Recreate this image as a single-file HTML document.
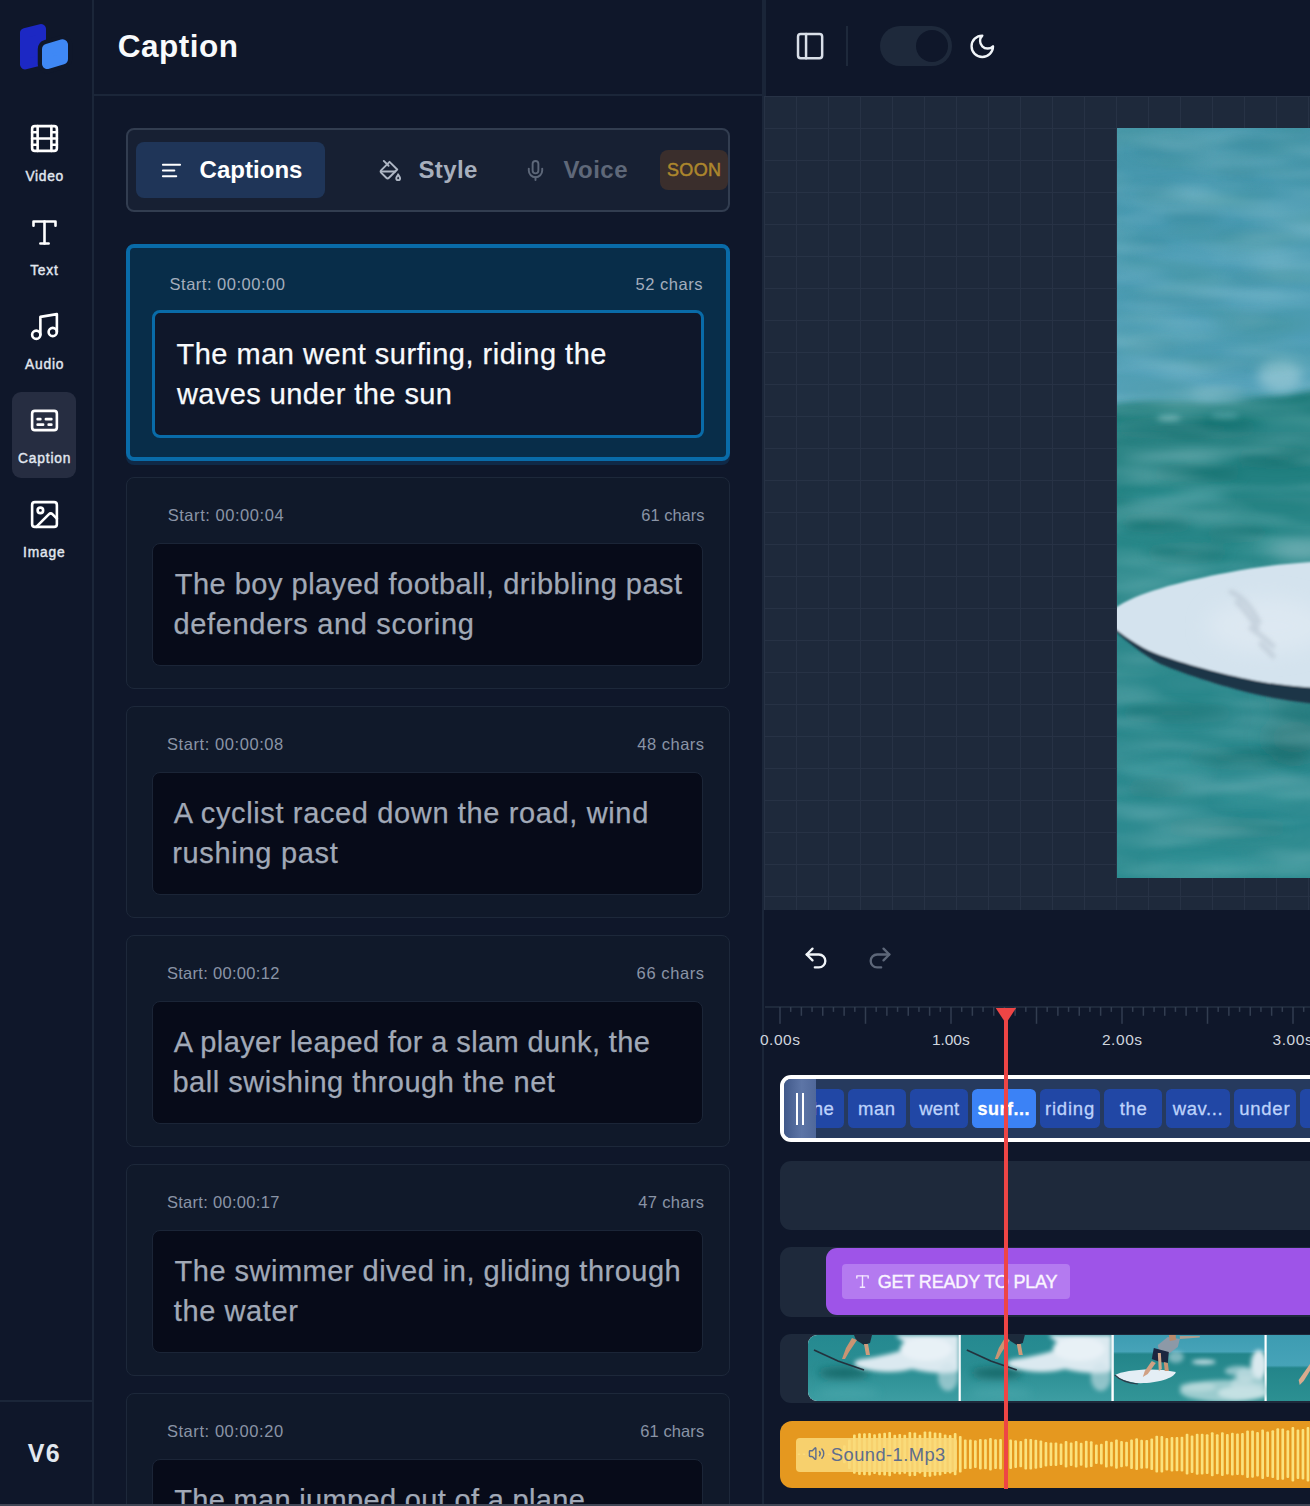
<!DOCTYPE html>
<html>
<head>
<meta charset="utf-8">
<title>Caption Editor</title>
<style>
*{box-sizing:border-box;margin:0;padding:0}
html,body{width:1310px;height:1506px;overflow:hidden;background:#0f172a;font-family:"Liberation Sans",sans-serif;color:#f8fafc}
.abs{position:absolute}
.t{position:absolute;white-space:nowrap}
#app{position:relative;width:1310px;height:1506px;overflow:hidden;background:#0f172a}
#side{position:absolute;left:0;top:0;width:94px;height:1506px;border-right:2.100px solid #1b2639}
.nav{position:absolute;left:12px;width:64px;height:86px;border-radius:9px}
.nav.active{background:#262d41}
.nav svg{position:absolute;left:15.650px;top:11.800px;width:33px;height:33px;fill:none;stroke:#fff;stroke-width:1.900;stroke-linecap:round;stroke-linejoin:round}
.nav .t{top:58.200px;font-size:13.800px;line-height:18px;color:#e2e8f0;-webkit-text-stroke:0.4px #e2e8f0}
#ver{position:absolute;left:0;top:1400px;width:92px;height:105px;border-top:2px solid #1b2639}
#ver .t{top:36px;font-size:25px;line-height:30px;color:#e2e8f0;font-weight:bold}
#panel{position:absolute;left:93px;top:0;width:671.200px;height:1506px;border-right:2.200px solid #1b2639}
#phead{position:absolute;left:0;top:0;width:669px;height:96.100px;border-bottom:2.100px solid #1b2639}
#title{left:26px;top:26px;font-size:31.5px;line-height:40px;color:#f8fafc;font-weight:bold}
#tabs{position:absolute;left:33px;top:128px;width:604px;height:84px;border:2px solid #323d50;border-radius:8px;background:#172033}
.tab{font-size:24px;line-height:30px;font-weight:bold}
.card{position:absolute;left:33px;width:604px;height:212px;border:1.600px solid #1d283a;border-radius:8px;background:#10192a}
.card .st,.card .ch{top:27px;font-size:16.5px;line-height:20px;color:#8a94a6}
.card .ta{position:absolute;left:25.400px;top:65.300px;width:551px;height:122.300px;border:1.500px solid #1b2537;border-radius:8px;background:#070b19;font-size:29px;line-height:40px;color:#a1a9b7;-webkit-text-stroke:0.25px currentColor}
.card .ln{position:absolute;white-space:nowrap;left:20.5px}
.card.act{border:4px solid #096ba8;background:#082d49;height:217px;box-shadow:0 4px 0 #0f2947}
.card.act .st,.card.act .ch{color:#a4aebd;top:25.800px}
.card.act .ta{border:3.5px solid #096ba8;background:#0f172a;color:#f8fafc;left:22px;top:62px;width:552px;height:128px}
#top{position:absolute;left:762px;top:0;width:548px;height:96px;background:#0f172a;border-left:4px solid #1a2538}
#canvas{position:absolute;left:764.200px;top:96px;width:546px;height:813.5px;background-color:#1e293b;
background-image:linear-gradient(to right,#273245 1.400px,transparent 1.400px),linear-gradient(to bottom,#273245 1.400px,transparent 1.400px);background-size:32px 32px;background-position:0 0}
#tl{position:absolute;left:765px;top:910px;width:545px;height:596px;background:#0f172a}
.rl{font-size:15.5px;line-height:20px;color:#cfd5de}
.chip{position:absolute;height:38.400px;border-radius:5.5px;background:#2147a5;color:#bdd2fb;font-size:18.5px;line-height:38px;overflow:hidden}
.chip.on{background:#3b82f6;color:#fff}
.chip .t{top:1px;-webkit-text-stroke:0.3px currentColor}
.chip.on .t{font-weight:bold;font-size:18px}
#gr{font-size:18px;line-height:24px;color:#faf5ff;-webkit-text-stroke:0.4px #faf5ff}
#snd{font-size:18.300px;line-height:24px;color:#5d6d8e}
</style>
</head>
<body>
<div id="app">
<div id="side">
<svg class="abs" style="left:0;top:0" width="93" height="96" viewBox="0 0 93 96">
 <polygon points="25,33 41,29 41,60.4 25,64.4" fill="#1c28c4" stroke="#1c28c4" stroke-width="10" stroke-linejoin="round"/>
 <polygon points="47.5,49.3 62.5,44.8 62.5,59.1 47.5,63.6" fill="#0f172a" stroke="#0f172a" stroke-width="19.5" stroke-linejoin="round"/>
 <polygon points="47.5,49.3 62.5,44.8 62.5,59.1 47.5,63.6" fill="#3f88f5" stroke="#3f88f5" stroke-width="11" stroke-linejoin="round"/>
</svg>
<div class="nav" style="top:110px"><svg viewBox="0 0 24 24"><rect width="18" height="18" x="3" y="3" rx="2"/><path d="M7 3v18M3 7.5h4M3 12h18M3 16.5h4M17 3v18M17 7.5h4M17 16.5h4"/></svg><div id="nVideo" class="t" style="left:13.53px;letter-spacing:0.645px;">Video</div></div>
<div class="nav" style="top:204px"><svg viewBox="0 0 24 24"><polyline points="4 7 4 4 20 4 20 7"/><line x1="9" x2="15" y1="20" y2="20"/><line x1="12" x2="12" y1="4" y2="20"/></svg><div id="nText" class="t" style="left:18.16px;letter-spacing:0.803px;">Text</div></div>
<div class="nav" style="top:298px"><svg viewBox="0 0 24 24"><path d="M9 18V5l12-2v13"/><circle cx="6" cy="18" r="3"/><circle cx="18" cy="16" r="3"/></svg><div id="nAudio" class="t" style="left:12.98px;letter-spacing:0.813px;">Audio</div></div>
<div class="nav active" style="top:392px"><svg viewBox="0 0 24 24"><rect width="18" height="14" x="3" y="5" rx="2" ry="2"/><path d="M7 15h4M15 15h2M7 11h2M13 11h4"/></svg><div id="nCaption" class="t" style="left:6.05px;letter-spacing:0.815px;">Caption</div></div>
<div class="nav" style="top:486px"><svg viewBox="0 0 24 24"><rect width="18" height="18" x="3" y="3" rx="2" ry="2"/><circle cx="9" cy="9" r="2"/><path d="m21 15-3.086-3.086a2 2 0 0 0-2.828 0L6 21"/></svg><div id="nImage" class="t" style="left:11.06px;letter-spacing:0.820px;">Image</div></div>
<div id="ver"><div id="v6" class="t" style="left:27.77px;letter-spacing:1.397px;">V6</div></div>
</div>
<div id="panel">
<div id="phead"><div id="title" class="t" style="left:24.71px;letter-spacing:0.505px;">Caption</div></div>
<div id="tabs">
<div class="abs" style="left:8px;top:12px;width:189px;height:56px;border-radius:8px;background:#1f3558"></div>
<svg class="abs" style="left:32px;top:29.30000000000001px;width:23px;height:23px;fill:none;stroke:#fff;stroke-width:2;stroke-linecap:round" viewBox="0 0 24 24"><path d="M3 6h18M3 12h12M3 18h14"/></svg>
<div id="tCap" class="t tab" style="left:71.52px;letter-spacing:0.038px;top:25px;color:#fff">Captions</div>
<svg class="abs" style="left:251px;top:28.5px;width:23px;height:23px;fill:none;stroke:#aeb6c4;stroke-width:2;stroke-linecap:round;stroke-linejoin:round" viewBox="0 0 24 24"><path d="m19 11-8-8-8.6 8.6a2 2 0 0 0 0 2.8l5.2 5.200a2 2 0 0 0 2.800 0L19 11Z"/><path d="m5 2 5 5"/><path d="M2 13h15"/><path d="M22 20a2 2 0 1 1-4 0c0-1.600 1.700-2.400 2-4 .300 1.600 2 2.400 2 4Z"/></svg>
<div id="tSty" class="t tab" style="left:290.50px;letter-spacing:0.362px;top:25px;color:#a7afbd">Style</div>
<svg class="abs" style="left:395.6px;top:28.599999999999994px;width:23px;height:23px;fill:none;stroke:#5d6779;stroke-width:2;stroke-linecap:round;stroke-linejoin:round" viewBox="0 0 24 24"><path d="M12 2a3 3 0 0 0-3 3v7a3 3 0 0 0 6 0V5a3 3 0 0 0-3-3Z"/><path d="M19 10v2a7 7 0 0 1-14 0v-2"/><line x1="12" x2="12" y1="19" y2="22"/></svg>
<div id="tVoi" class="t tab" style="left:435.43px;letter-spacing:0.456px;top:25px;color:#5f6879">Voice</div>
<div class="abs" style="left:531.5px;top:20px;width:68.5px;height:40px;border-radius:8px;background:#3a2e2c"></div>
<div id="tSoon" class="t" style="left:539.08px;letter-spacing:0.276px;top:28px;font-size:18px;line-height:24px;color:#ad872d;-webkit-text-stroke:0.5px #ad872d">SOON</div>
</div>
<div class="card act" style="top:244px">
<div id="st0" class="t st" style="left:39.61px;letter-spacing:0.498px;">Start: 00:00:00</div>
<div id="ch0" class="t ch" style="left:505.52px;letter-spacing:0.534px;">52 chars</div>
<div class="ta">
<div id="c0l0" class="ln" style="left:21.44px;top:20.6px;letter-spacing:0.508px;">The man went surfing, riding the</div>
<div id="c0l1" class="ln" style="left:21.89px;top:60.599999999999994px;letter-spacing:0.416px;">waves under the sun</div>
</div></div>
<div class="card" style="top:477.1px">
<div id="st1" class="t st" style="left:40.70px;letter-spacing:0.548px;">Start: 00:00:04</div>
<div id="ch1" class="t ch" style="left:514.37px;letter-spacing:-0.034px;">61 chars</div>
<div class="ta">
<div id="c1l0" class="ln" style="left:21.32px;top:20.1px;letter-spacing:0.499px;">The boy played football, dribbling past</div>
<div id="c1l1" class="ln" style="left:20.07px;top:60.1px;letter-spacing:0.670px;">defenders and scoring</div>
</div></div>
<div class="card" style="top:706.1px">
<div id="st2" class="t st" style="left:39.90px;letter-spacing:0.580px;">Start: 00:00:08</div>
<div id="ch2" class="t ch" style="left:510.19px;letter-spacing:0.515px;">48 chars</div>
<div class="ta">
<div id="c2l0" class="ln" style="left:20.34px;top:20.1px;letter-spacing:0.635px;">A cyclist raced down the road, wind</div>
<div id="c2l1" class="ln" style="left:18.80px;top:60.1px;letter-spacing:0.691px;">rushing past</div>
</div></div>
<div class="card" style="top:935.1px">
<div id="st3" class="t st" style="left:39.90px;letter-spacing:0.298px;">Start: 00:00:12</div>
<div id="ch3" class="t ch" style="left:509.62px;letter-spacing:0.597px;">66 chars</div>
<div class="ta">
<div id="c3l0" class="ln" style="left:20.34px;top:20.1px;letter-spacing:0.386px;">A player leaped for a slam dunk, the</div>
<div id="c3l1" class="ln" style="left:19.04px;top:60.1px;letter-spacing:0.531px;">ball swishing through the net</div>
</div></div>
<div class="card" style="top:1164.1px">
<div id="st4" class="t st" style="left:39.90px;letter-spacing:0.298px;">Start: 00:00:17</div>
<div id="ch4" class="t ch" style="left:511.19px;letter-spacing:0.372px;">47 chars</div>
<div class="ta">
<div id="c4l0" class="ln" style="left:21.19px;top:20.1px;letter-spacing:0.491px;">The swimmer dived in, gliding through</div>
<div id="c4l1" class="ln" style="left:20.45px;top:60.1px;letter-spacing:0.592px;">the water</div>
</div></div>
<div class="card" style="top:1393.1px">
<div id="st5" class="t st" style="left:39.90px;letter-spacing:0.568px;">Start: 00:00:20</div>
<div id="ch5" class="t ch" style="left:513.37px;letter-spacing:0.074px;">61 chars</div>
<div class="ta">
<div id="c5l0" class="ln" style="left:20.80px;top:20.1px;letter-spacing:0.330px;">The man jumped out of a plane</div>
<div id="c5l1" class="ln" style="left:19.50px;top:60.1px;letter-spacing:0.400px;">parachuting safely</div>
</div></div>
</div>
<div id="top">
 <svg class="abs" style="left:27.900px;top:29.600px;width:32.200px;height:32.200px;fill:none;stroke:#d9dfe8;stroke-width:1.850;stroke-linecap:round;stroke-linejoin:round" viewBox="0 0 24 24"><rect width="18" height="18" x="3" y="3" rx="2"/><path d="M9 3v18"/></svg>
 <div class="abs" style="left:80.300px;top:26px;width:1.5px;height:40px;background:#1e293b"></div>
 <div class="abs" style="left:114px;top:26px;width:72px;height:40px;border-radius:20px;background:#1e293b"></div>
 <div class="abs" style="left:150.200px;top:30px;width:32px;height:32px;border-radius:16px;background:#0f172a"></div>
 <svg class="abs" style="left:202.300px;top:32.300px;width:28.600px;height:28.600px;fill:none;stroke:#f1f5f9;stroke-width:2;stroke-linecap:round;stroke-linejoin:round" viewBox="0 0 24 24"><path d="M12 3a6 6 0 0 0 9 9 9 9 0 1 1-9-9Z"/></svg>
</div>
<div id="canvas">
 <svg class="abs" style="left:352.800px;top:32px" width="200" height="750" viewBox="0 0 200 750">
  <defs>
   <linearGradient id="sea" x1="0" y1="0" x2="0" y2="1">
    <stop offset="0" stop-color="#4595aa"/><stop offset="0.12" stop-color="#4999b1"/><stop offset="0.3" stop-color="#4f9eb7"/><stop offset="0.345" stop-color="#56a2ba"/><stop offset="1" stop-color="#56a2ba"/>
   </linearGradient>
   <linearGradient id="sea2" x1="0" y1="0" x2="0" y2="1">
    <stop offset="0" stop-color="#1e7877"/><stop offset="0.1" stop-color="#207d7d"/><stop offset="0.3" stop-color="#288687"/><stop offset="0.6" stop-color="#2a878b"/><stop offset="0.85" stop-color="#2c898f"/><stop offset="1" stop-color="#2b8a8e"/>
   </linearGradient>
   <filter id="tex" x="0" y="0" width="100%" height="100%">
    <feTurbulence type="fractalNoise" baseFrequency="0.010 0.05" numOctaves="2" seed="4" result="n"/>
    <feColorMatrix in="n" type="matrix" values="0 0 0 0 0.06  0 0 0 0 0.30  0 0 0 0 0.32  1.600 0 0 0 -0.62"/>
    <feGaussianBlur stdDeviation="2"/>
   </filter>
   <filter id="tex2" x="0" y="0" width="100%" height="100%">
    <feTurbulence type="fractalNoise" baseFrequency="0.009 0.045" numOctaves="2" seed="11" result="n"/>
    <feColorMatrix in="n" type="matrix" values="0 0 0 0 0.55  0 0 0 0 0.80  0 0 0 0 0.85  0 1.500 0 0 -0.62"/>
    <feGaussianBlur stdDeviation="2"/>
   </filter>
   <filter id="b1" x="-20%" y="-20%" width="140%" height="140%"><feGaussianBlur stdDeviation="1.300"/></filter>
   <filter id="b2" x="-30%" y="-30%" width="160%" height="160%"><feGaussianBlur stdDeviation="2"/></filter>
   <filter id="b3" x="-30%" y="-50%" width="160%" height="200%"><feGaussianBlur stdDeviation="3"/></filter>
   <filter id="b6" x="-40%" y="-60%" width="180%" height="220%"><feGaussianBlur stdDeviation="6"/></filter>
   <filter id="b10" x="-50%" y="-80%" width="200%" height="260%"><feGaussianBlur stdDeviation="10"/></filter>
  </defs>
  <rect width="200" height="750" fill="url(#sea)"/>
  <!-- upper water streaks -->
  <g filter="url(#b6)" fill="#38899a" opacity="0.5">
   <ellipse cx="55" cy="22" rx="38" ry="7"/><ellipse cx="140" cy="14" rx="34" ry="6"/><ellipse cx="185" cy="8" rx="20" ry="8"/>
   <ellipse cx="45" cy="66" rx="26" ry="8"/><ellipse cx="120" cy="45" rx="22" ry="6"/><ellipse cx="75" cy="89" rx="30" ry="8"/>
   <ellipse cx="140" cy="108" rx="42" ry="7"/><ellipse cx="30" cy="116" rx="24" ry="6"/><ellipse cx="150" cy="150" rx="40" ry="6"/>
   <ellipse cx="60" cy="172" rx="50" ry="6"/><ellipse cx="130" cy="194" rx="36" ry="7"/><ellipse cx="35" cy="220" rx="28" ry="6"/><ellipse cx="120" cy="236" rx="50" ry="6"/>
  </g>
  <g filter="url(#b6)" fill="#62abc2" opacity="0.45"><ellipse cx="100" cy="130" rx="80" ry="8"/><ellipse cx="60" cy="200" rx="50" ry="7"/><ellipse cx="150" cy="172" rx="40" ry="6"/><ellipse cx="90" cy="60" rx="40" ry="6"/></g>
  <!-- lower sea with wavy top -->
  <g filter="url(#b3)">
   <path d="M-10 277 C30 270 60 274 100 273 C135 272 165 266 203 262 L203 760 L-10 760 Z" fill="url(#sea2)"/>
  </g>
  <!-- foam patches near crest -->
  <g filter="url(#b6)">
   <ellipse cx="163" cy="248" rx="22" ry="16" fill="#8fc3d1" opacity="0.85"/>
   <ellipse cx="100" cy="266" rx="26" ry="7" fill="#7cb8c8" opacity="0.800"/>
  </g>
  <g filter="url(#b3)"><ellipse cx="52" cy="291" rx="12" ry="2.500" fill="#9fd3d6" opacity="0.9"/><ellipse cx="108" cy="288" rx="14" ry="3" fill="#5fa9ad" opacity="0.800"/></g>
  <!-- lower water dark streaks -->
  <g filter="url(#b6)" fill="#176a69" opacity="0.55">
   <ellipse cx="70" cy="300" rx="70" ry="8"/><ellipse cx="160" cy="330" rx="40" ry="7"/><ellipse cx="80" cy="345" rx="45" ry="6"/>
   <ellipse cx="40" cy="395" rx="35" ry="7"/><ellipse cx="120" cy="405" rx="30" ry="6"/><ellipse cx="70" cy="425" rx="40" ry="7"/>
   <ellipse cx="60" cy="585" rx="55" ry="7"/><ellipse cx="130" cy="630" rx="60" ry="8"/><ellipse cx="40" cy="660" rx="30" ry="6"/><ellipse cx="110" cy="700" rx="60" ry="7"/>
  </g>
  <g filter="url(#b10)"><ellipse cx="178" cy="610" rx="30" ry="22" fill="#1a6464" opacity="0.7"/><ellipse cx="185" cy="570" rx="40" ry="10" fill="#1a6666" opacity="0.6"/></g>
  <g filter="url(#b6)" fill="#3a9a9f" opacity="0.5"><ellipse cx="60" cy="370" rx="50" ry="7"/><ellipse cx="50" cy="640" rx="45" ry="8"/><ellipse cx="140" cy="670" rx="40" ry="7"/><ellipse cx="90" cy="735" rx="60" ry="8"/></g>
  <rect x="-12" y="-12" width="230" height="774" filter="url(#tex)" opacity="0.6"/>
  <rect x="-12" y="-12" width="230" height="774" filter="url(#tex2)" opacity="0.38"/>
  <!-- spray mist above board -->
  <g filter="url(#b10)"><ellipse cx="190" cy="424" rx="36" ry="10" fill="#a9cdd6" opacity="0.5"/></g>
  <!-- board -->
  <g filter="url(#b1)">
   <path d="M-14 491 C-6 500 20 524 43.400 536 C70 547 110 560 144.300 567.600 C165 571.500 180 574 200 576 L200 545 L-14 488 Z" fill="#1e3547"/>
   <path d="M-14 490 C0 476 20 467 43.400 460.400 C65 454 80 451 93.900 447.800 C115 443.500 130 441 144.300 439 C165 436 180 435 200 433.500 L200 560 C180 558.500 160 556.500 144.300 553.700 C125 550 110 546.500 93.900 542.400 C75 537.500 60 533 43.400 527.300 C25 520.500 5 508 -14 490 Z" fill="#d4e3ee"/>
  </g>
  <g filter="url(#b10)"><ellipse cx="150" cy="498" rx="60" ry="28" fill="#dfeaf3" opacity="0.800"/></g>
  <!-- board logo -->
  <g filter="url(#b2)" stroke="#b3c0cc" stroke-width="5" fill="none" stroke-linecap="round" opacity="0.55">
   <path d="M114 464 C124 468 134 478 142 494"/><path d="M120 474 C128 482 134 490 140 500"/><path d="M134 500 C142 506 150 512 156 518"/><path d="M144 516 L156 528"/>
  </g>
 </svg>
</div>

<div id="tl">
<svg class="abs" style="left:36.8px;top:33.9px;width:28px;height:28px;fill:none;stroke:#f1f5f9;stroke-width:2;stroke-linecap:round;stroke-linejoin:round" viewBox="0 0 24 24"><path d="M9 14 4 9l5-5"/><path d="M4 9h10.5a5.5 5.5 0 0 1 5.5 5.5a5.5 5.5 0 0 1-5.5 5.5H11"/></svg>
<svg class="abs" style="left:100.9px;top:33.9px;width:28px;height:28px;fill:none;stroke:#5d6779;stroke-width:2;stroke-linecap:round;stroke-linejoin:round" viewBox="0 0 24 24"><path d="m15 14 5-5-5-5"/><path d="M20 9H9.5A5.5 5.500 0 0 0 4 14.500A5.500 5.500 0 0 0 9.500 20H13"/></svg>
<div class="abs" style="left:0;top:96.2px;width:545px;height:1.5px;background:#1e293b"></div>
<svg class="abs" style="left:0;top:97px" width="545" height="18" fill="#323d50"><rect x="14.25" y="0" width="1.5" height="16.8"/><rect x="24.94" y="0" width="1.5" height="4.9"/><rect x="35.62" y="0" width="1.5" height="8.8"/><rect x="46.31" y="0" width="1.5" height="4.9"/><rect x="57.00" y="0" width="1.5" height="8.8"/><rect x="67.69" y="0" width="1.5" height="4.9"/><rect x="78.38" y="0" width="1.5" height="8.8"/><rect x="89.06" y="0" width="1.5" height="4.9"/><rect x="99.75" y="0" width="1.5" height="16.8"/><rect x="110.44" y="0" width="1.5" height="4.9"/><rect x="121.12" y="0" width="1.5" height="8.8"/><rect x="131.81" y="0" width="1.5" height="4.9"/><rect x="142.50" y="0" width="1.5" height="8.8"/><rect x="153.19" y="0" width="1.5" height="4.9"/><rect x="163.88" y="0" width="1.5" height="8.8"/><rect x="174.56" y="0" width="1.5" height="4.9"/><rect x="185.25" y="0" width="1.5" height="16.8"/><rect x="195.94" y="0" width="1.5" height="4.9"/><rect x="206.62" y="0" width="1.5" height="8.8"/><rect x="217.31" y="0" width="1.5" height="4.9"/><rect x="228.00" y="0" width="1.5" height="8.8"/><rect x="238.69" y="0" width="1.5" height="4.9"/><rect x="249.38" y="0" width="1.5" height="8.8"/><rect x="260.06" y="0" width="1.5" height="4.9"/><rect x="270.75" y="0" width="1.5" height="16.8"/><rect x="281.44" y="0" width="1.5" height="4.9"/><rect x="292.12" y="0" width="1.5" height="8.8"/><rect x="302.81" y="0" width="1.5" height="4.9"/><rect x="313.50" y="0" width="1.5" height="8.8"/><rect x="324.19" y="0" width="1.5" height="4.9"/><rect x="334.88" y="0" width="1.5" height="8.8"/><rect x="345.56" y="0" width="1.5" height="4.9"/><rect x="356.25" y="0" width="1.5" height="16.8"/><rect x="366.94" y="0" width="1.5" height="4.9"/><rect x="377.62" y="0" width="1.5" height="8.8"/><rect x="388.31" y="0" width="1.5" height="4.9"/><rect x="399.00" y="0" width="1.5" height="8.8"/><rect x="409.69" y="0" width="1.5" height="4.9"/><rect x="420.38" y="0" width="1.5" height="8.8"/><rect x="431.06" y="0" width="1.5" height="4.9"/><rect x="441.75" y="0" width="1.5" height="16.8"/><rect x="452.44" y="0" width="1.5" height="4.9"/><rect x="463.12" y="0" width="1.5" height="8.8"/><rect x="473.81" y="0" width="1.5" height="4.9"/><rect x="484.50" y="0" width="1.5" height="8.8"/><rect x="495.19" y="0" width="1.5" height="4.9"/><rect x="505.88" y="0" width="1.5" height="8.8"/><rect x="516.56" y="0" width="1.5" height="4.9"/><rect x="527.25" y="0" width="1.5" height="16.8"/><rect x="537.94" y="0" width="1.5" height="4.9"/></svg>
<div id="rl0" class="t rl" style="left:-5.14px;letter-spacing:0.563px;top:120px">0.00s</div>
<div id="rl1" class="t rl" style="left:166.92px;letter-spacing:-0.045px;top:120px">1.00s</div>
<div id="rl2" class="t rl" style="left:336.93px;letter-spacing:0.556px;top:120px">2.00s</div>
<div id="rl3" class="t rl" style="left:507.56px;letter-spacing:0.563px;top:120px">3.00s</div>
<div class="abs" style="left:15px;top:164.5px;width:560px;height:67.700px;border:4.2px solid #fff;border-radius:11px;background:#263a5e"></div>
<div class="chip" style="left:35px;top:179.2px;width:44px"><div id="cp0" class="t" style="left:12.76px;letter-spacing:0.584px;">he</div></div>
<div class="chip" style="left:83.2px;top:179.2px;width:57.7px"><div id="cp1" class="t" style="left:9.70px;letter-spacing:0.627px;">man</div></div>
<div class="chip" style="left:145px;top:179.2px;width:57.8px"><div id="cp2" class="t" style="left:9.19px;letter-spacing:0.297px;">went</div></div>
<div class="chip on" style="left:207px;top:179.2px;width:64px"><div id="cp3" class="t" style="left:5.48px;letter-spacing:0.513px;">surf...</div></div>
<div class="chip" style="left:275.2px;top:179.2px;width:59.8px"><div id="cp4" class="t" style="left:4.81px;letter-spacing:0.788px;">riding</div></div>
<div class="chip" style="left:339.3px;top:179.2px;width:57.7px"><div id="cp5" class="t" style="left:15.40px;letter-spacing:0.686px;">the</div></div>
<div class="chip" style="left:401.2px;top:179.2px;width:64.0px"><div id="cp6" class="t" style="left:6.48px;letter-spacing:0.611px;">wav...</div></div>
<div class="chip" style="left:469px;top:179.2px;width:62px"><div id="cp7" class="t" style="left:5.18px;letter-spacing:0.774px;">under</div></div>
<div class="chip" style="left:535px;top:179.2px;width:40px"></div>
<div class="abs" style="left:19.2px;top:168.5px;width:31.5px;height:59.600px;border-radius:7px 0 0 7px;background:linear-gradient(to right,#41598a,#5d75a6 55%,#50689a)"></div>
<div class="abs" style="left:31.1px;top:183px;width:2.300px;height:31.5px;background:#fff"></div>
<div class="abs" style="left:36.8px;top:183px;width:2.300px;height:31.5px;background:#fff"></div>
<div class="abs" style="left:15px;top:250.5px;width:560px;height:69.300px;border-radius:11px;background:#1e293b"></div>
<div class="abs" style="left:15px;top:336.6px;width:560px;height:70px;border-radius:11px;background:#1e293b"></div>
<div class="abs" style="left:61px;top:337.8px;width:520px;height:67.200px;border-radius:11px;background:#9e54e8"></div>
<div class="abs" style="left:76.9px;top:354.2px;width:228px;height:34.400px;border-radius:4px;background:#b47af0"></div>
<svg class="abs" style="left:88.5px;top:363px;width:17px;height:17px;fill:none;stroke:#f3e8ff;stroke-width:2;stroke-linecap:round;stroke-linejoin:round" viewBox="0 0 24 24"><polyline points="4 7 4 4 20 4 20 7"/><line x1="9" x2="15" y1="20" y2="20"/><line x1="12" x2="12" y1="4" y2="20"/></svg>
<div id="gr" class="t" style="left:112.75px;letter-spacing:-0.158px;top:360px">GET READY TO PLAY</div>
<div class="abs" style="left:15px;top:423.5px;width:560px;height:69.200px;border-radius:11px;background:#1e293b"></div>
<div class="abs" id="thumbs" style="left:43.300px;top:424.900px;width:520px;height:65.900px;border-radius:9px 0 0 9px;overflow:hidden;background:#fff">
<svg class="abs" style="left:0;top:0" width="520" height="66" viewBox="0 0 520 66">
 <defs>
  <filter id="t1" x="-20%" y="-20%" width="140%" height="140%"><feGaussianBlur stdDeviation="0.700"/></filter>
  <filter id="t2" x="-30%" y="-30%" width="160%" height="160%"><feGaussianBlur stdDeviation="2"/></filter>
  <filter id="t4" x="-40%" y="-40%" width="180%" height="180%"><feGaussianBlur stdDeviation="4"/></filter>
  <linearGradient id="tg" x1="0" y1="0" x2="0" y2="1"><stop offset="0" stop-color="#258990"/><stop offset="0.5" stop-color="#2a8e93"/><stop offset="1" stop-color="#3d9da2"/></linearGradient>
  <linearGradient id="tg3" x1="0" y1="0" x2="0" y2="1"><stop offset="0" stop-color="#3d9cb2"/><stop offset="0.25" stop-color="#46a3b8"/><stop offset="0.29" stop-color="#23858a"/><stop offset="1" stop-color="#329597"/></linearGradient>
  <linearGradient id="tg4" x1="0" y1="0" x2="0" y2="1"><stop offset="0" stop-color="#3d9cb2"/><stop offset="0.46" stop-color="#46a3b8"/><stop offset="0.5" stop-color="#23858a"/><stop offset="1" stop-color="#2c9092"/></linearGradient>
   </defs>
 <g>
   <rect width="150.600" height="66" fill="url(#tg)"/>
   <g filter="url(#t4)"><ellipse cx="36" cy="38" rx="26" ry="5" fill="#14605f" opacity="0.9"/><ellipse cx="40" cy="58" rx="30" ry="5" fill="#4ba8ad" opacity="0.6"/></g>
   <g filter="url(#t2)">
    <path d="M88 0 L151 0 L151 36 C140 40 120 38 104 34 C90 38 70 38 52 33 C44 30 44 26 54 24 C70 22 86 18 98 14 C104 10 92 6 88 0 Z" fill="#dbe9f0"/>
    <ellipse cx="140" cy="42" rx="10" ry="14" fill="#cfe3ea" opacity="0.6"/>
    <ellipse cx="118" cy="14" rx="26" ry="12" fill="#e8f1f6"/>
   </g>
   <g filter="url(#t1)">
    <path d="M6 15 L30 26 L56 35" stroke="#23323e" stroke-width="1.800" fill="none"/>
    <path d="M46 0 L64 0 L62 8 L56 10 L48 5 Z" fill="#1e2a3b"/>
    <path d="M44 3 L49 5 L41 17 L37 24 L34 24 L38 13 Z" fill="#c99473"/>
    <path d="M56 9 L60 9 L62 20 L58 20 Z" fill="#cf9c7c"/>
   </g>
  </g>
 <g transform="translate(152.800 0)">
   <rect width="150.600" height="66" fill="url(#tg)"/>
   <g filter="url(#t4)"><ellipse cx="36" cy="38" rx="26" ry="5" fill="#14605f" opacity="0.9"/><ellipse cx="40" cy="58" rx="30" ry="5" fill="#4ba8ad" opacity="0.6"/></g>
   <g filter="url(#t2)">
    <path d="M88 0 L151 0 L151 36 C140 40 120 38 104 34 C90 38 70 38 52 33 C44 30 44 26 54 24 C70 22 86 18 98 14 C104 10 92 6 88 0 Z" fill="#dbe9f0"/>
    <ellipse cx="140" cy="42" rx="10" ry="14" fill="#cfe3ea" opacity="0.6"/>
    <ellipse cx="118" cy="14" rx="26" ry="12" fill="#e8f1f6"/>
   </g>
   <g filter="url(#t1)">
    <path d="M6 15 L30 26 L56 35" stroke="#23323e" stroke-width="1.800" fill="none"/>
    <path d="M46 0 L64 0 L62 8 L56 10 L48 5 Z" fill="#1e2a3b"/>
    <path d="M44 3 L49 5 L41 17 L37 24 L34 24 L38 13 Z" fill="#c99473"/>
    <path d="M56 9 L60 9 L62 20 L58 20 Z" fill="#cf9c7c"/>
   </g>
  </g>
 <!-- thumb 3 -->
 <g transform="translate(305.800 0)">
  <rect width="150.700" height="66" fill="url(#tg3)"/>
  <g filter="url(#t2)">
   <ellipse cx="145" cy="30" rx="8" ry="15" fill="#e3eef3" opacity="0.95"/><ellipse cx="132" cy="40" rx="10" ry="7" fill="#d2e6ea" opacity="0.7"/>
   <ellipse cx="90" cy="27" rx="12" ry="2.500" fill="#d5e8ee" opacity="0.9"/>
   <ellipse cx="125" cy="36" rx="14" ry="5" fill="#b9dadf" opacity="0.7"/>
   <ellipse cx="112" cy="56" rx="46" ry="11" fill="#b5d9dc" opacity="0.800"/><ellipse cx="128" cy="58" rx="24" ry="7" fill="#d6e9ec" opacity="0.7"/><ellipse cx="84" cy="52" rx="18" ry="5" fill="#c4e0e3" opacity="0.6"/>
   <ellipse cx="135" cy="48" rx="18" ry="8" fill="#c5e0e4" opacity="0.7"/>
   <ellipse cx="62" cy="22" rx="8" ry="6" fill="#b5d7df" opacity="0.6"/>
  </g>
  <g filter="url(#t1)">
   <path d="M1 40 C10 35 40 32 62 37 C60 44 40 49 22 48 C12 46 4 44 1 40 Z" fill="#e4eef5"/>
   <path d="M1 40 C6 45 14 48 24 49" stroke="#2a3c4a" stroke-width="1.200" fill="none"/>
   <path d="M44 10 L54 2 L66 4 L64 12 L56 18 L46 20 Z" fill="#8d99a7"/>
   <path d="M55 0 L62 0 L62 5 L56 6 Z" fill="#b98a6c"/>
   <path d="M66 1 L86 1 L86 2.500 L66 4 Z" fill="#c9a088" opacity="0.800"/>
   <path d="M40 13 L55 17 L54 28 L46 27 L38 24 Z" fill="#1c2740"/>
   <path d="M38 26 L42 28 L34 39 L29 42 L31 36 Z" fill="#d0a184"/>
   <path d="M50 27 L54 28 L55 36 L51 36 Z" fill="#c99473"/>
   <path d="M44 18 L47 18 L48 34 L45 36 Z" fill="#d3a78a"/>
  </g>
 </g>
 <!-- thumb 4 -->
 <g transform="translate(458.700 0)">
  <rect width="150" height="66" fill="url(#tg4)"/>
  <g filter="url(#t1)"><path d="M44 28 L47 30 L37 46 L33 50 L32 45 Z" fill="#d8ab8e"/></g>
 </g>
</svg>
</div>

<div class="abs" style="left:15px;top:510.8px;width:560px;height:67.200px;border-radius:12px;background:#e5981f"></div>
<svg class="abs" style="left:0;top:0" width="545" height="596" fill="#fbe27c"><rect x="32.6" y="543.4" width="2.7" height="1.6" rx="1"/><rect x="37.6" y="543.4" width="2.7" height="1.6" rx="1"/><rect x="42.7" y="543.4" width="2.7" height="1.6" rx="1"/><rect x="47.7" y="543.4" width="2.7" height="1.6" rx="1"/><rect x="52.8" y="543.4" width="2.7" height="1.6" rx="1"/><rect x="57.8" y="543.4" width="2.7" height="1.6" rx="1"/><rect x="62.8" y="543.4" width="2.7" height="1.6" rx="1"/><rect x="67.9" y="543.2" width="2.7" height="2.0" rx="1"/><rect x="72.9" y="541.1" width="2.7" height="6.2" rx="1"/><rect x="78.0" y="535.2" width="2.7" height="18.0" rx="1"/><rect x="83.0" y="529.4" width="2.7" height="29.6" rx="1"/><rect x="88.0" y="524.6" width="2.7" height="39.1" rx="1"/><rect x="93.1" y="523.3" width="2.7" height="41.8" rx="1"/><rect x="98.1" y="523.2" width="2.7" height="42.1" rx="1"/><rect x="103.2" y="522.9" width="2.7" height="42.6" rx="1"/><rect x="108.2" y="524.3" width="2.7" height="39.7" rx="1"/><rect x="113.2" y="523.2" width="2.7" height="42.1" rx="1"/><rect x="118.3" y="522.7" width="2.7" height="42.9" rx="1"/><rect x="123.3" y="522.1" width="2.7" height="44.1" rx="1"/><rect x="128.4" y="524.7" width="2.7" height="39.1" rx="1"/><rect x="133.4" y="523.9" width="2.7" height="40.6" rx="1"/><rect x="138.4" y="524.7" width="2.7" height="39.1" rx="1"/><rect x="143.5" y="522.1" width="2.7" height="44.2" rx="1"/><rect x="148.5" y="522.5" width="2.7" height="43.4" rx="1"/><rect x="153.6" y="524.8" width="2.7" height="38.7" rx="1"/><rect x="158.6" y="521.5" width="2.7" height="45.5" rx="1"/><rect x="163.6" y="521.5" width="2.7" height="45.3" rx="1"/><rect x="168.7" y="522.6" width="2.7" height="43.1" rx="1"/><rect x="173.7" y="522.8" width="2.7" height="42.8" rx="1"/><rect x="178.8" y="524.4" width="2.7" height="39.5" rx="1"/><rect x="183.8" y="524.9" width="2.7" height="38.5" rx="1"/><rect x="188.8" y="523.1" width="2.7" height="42.2" rx="1"/><rect x="193.9" y="525.9" width="2.7" height="36.6" rx="1"/><rect x="198.9" y="529.4" width="2.7" height="29.6" rx="1"/><rect x="204.0" y="529.4" width="2.7" height="29.6" rx="1"/><rect x="209.0" y="530.3" width="2.7" height="27.7" rx="1"/><rect x="214.0" y="529.0" width="2.7" height="30.5" rx="1"/><rect x="219.1" y="529.2" width="2.7" height="30.0" rx="1"/><rect x="224.1" y="528.0" width="2.7" height="32.5" rx="1"/><rect x="229.2" y="529.3" width="2.7" height="29.8" rx="1"/><rect x="234.2" y="529.1" width="2.7" height="30.3" rx="1"/><rect x="239.2" y="529.7" width="2.7" height="28.9" rx="1"/><rect x="244.3" y="529.4" width="2.7" height="29.7" rx="1"/><rect x="249.3" y="530.3" width="2.7" height="27.8" rx="1"/><rect x="254.4" y="531.1" width="2.7" height="26.1" rx="1"/><rect x="259.4" y="528.7" width="2.7" height="30.9" rx="1"/><rect x="264.4" y="529.0" width="2.7" height="30.5" rx="1"/><rect x="269.5" y="529.7" width="2.7" height="29.0" rx="1"/><rect x="274.5" y="530.4" width="2.7" height="27.6" rx="1"/><rect x="279.6" y="532.0" width="2.7" height="24.4" rx="1"/><rect x="284.6" y="532.5" width="2.7" height="23.4" rx="1"/><rect x="289.6" y="532.5" width="2.7" height="23.5" rx="1"/><rect x="294.7" y="533.4" width="2.7" height="21.7" rx="1"/><rect x="299.7" y="531.0" width="2.7" height="26.5" rx="1"/><rect x="304.8" y="532.4" width="2.7" height="23.6" rx="1"/><rect x="309.8" y="530.9" width="2.7" height="26.6" rx="1"/><rect x="314.8" y="532.7" width="2.7" height="23.1" rx="1"/><rect x="319.9" y="530.7" width="2.7" height="27.0" rx="1"/><rect x="324.9" y="531.2" width="2.7" height="25.9" rx="1"/><rect x="330.0" y="534.4" width="2.7" height="19.6" rx="1"/><rect x="335.0" y="533.7" width="2.7" height="20.9" rx="1"/><rect x="340.0" y="530.7" width="2.7" height="26.9" rx="1"/><rect x="345.1" y="531.8" width="2.7" height="24.7" rx="1"/><rect x="350.1" y="529.5" width="2.7" height="29.3" rx="1"/><rect x="355.2" y="531.1" width="2.7" height="26.1" rx="1"/><rect x="360.2" y="531.8" width="2.7" height="24.7" rx="1"/><rect x="365.2" y="529.4" width="2.7" height="29.7" rx="1"/><rect x="370.3" y="528.3" width="2.7" height="31.7" rx="1"/><rect x="375.3" y="529.7" width="2.7" height="29.0" rx="1"/><rect x="380.4" y="529.9" width="2.7" height="28.7" rx="1"/><rect x="385.4" y="528.5" width="2.7" height="31.4" rx="1"/><rect x="390.4" y="525.7" width="2.7" height="36.9" rx="1"/><rect x="395.5" y="526.0" width="2.7" height="36.4" rx="1"/><rect x="400.5" y="527.9" width="2.7" height="32.7" rx="1"/><rect x="405.6" y="527.0" width="2.7" height="34.4" rx="1"/><rect x="410.6" y="527.1" width="2.7" height="34.2" rx="1"/><rect x="415.6" y="526.8" width="2.7" height="34.8" rx="1"/><rect x="420.7" y="523.7" width="2.7" height="40.9" rx="1"/><rect x="425.7" y="525.6" width="2.7" height="37.3" rx="1"/><rect x="430.8" y="523.8" width="2.7" height="40.9" rx="1"/><rect x="435.8" y="523.7" width="2.7" height="40.9" rx="1"/><rect x="440.8" y="524.3" width="2.7" height="39.8" rx="1"/><rect x="445.9" y="522.2" width="2.7" height="44.0" rx="1"/><rect x="450.9" y="524.3" width="2.7" height="39.9" rx="1"/><rect x="456.0" y="522.3" width="2.7" height="43.8" rx="1"/><rect x="461.0" y="524.1" width="2.7" height="40.3" rx="1"/><rect x="466.0" y="522.8" width="2.7" height="42.7" rx="1"/><rect x="471.1" y="523.5" width="2.7" height="41.5" rx="1"/><rect x="476.1" y="523.1" width="2.7" height="42.1" rx="1"/><rect x="481.2" y="520.4" width="2.7" height="47.6" rx="1"/><rect x="486.2" y="520.6" width="2.7" height="47.2" rx="1"/><rect x="491.2" y="521.9" width="2.7" height="44.5" rx="1"/><rect x="496.3" y="519.4" width="2.7" height="49.6" rx="1"/><rect x="501.3" y="521.4" width="2.7" height="45.6" rx="1"/><rect x="506.4" y="520.3" width="2.7" height="47.8" rx="1"/><rect x="511.4" y="518.2" width="2.7" height="51.9" rx="1"/><rect x="516.4" y="518.6" width="2.7" height="51.2" rx="1"/><rect x="521.5" y="520.3" width="2.7" height="47.8" rx="1"/><rect x="526.5" y="516.9" width="2.7" height="54.7" rx="1"/><rect x="531.6" y="519.4" width="2.7" height="49.6" rx="1"/><rect x="536.6" y="519.0" width="2.7" height="50.4" rx="1"/><rect x="541.6" y="516.9" width="2.7" height="54.6" rx="1"/><rect x="546.7" y="518.2" width="2.7" height="51.9" rx="1"/></svg>
<div class="abs" style="left:30.7px;top:527.6px;width:161.600px;height:34.800px;border-radius:4px;background:rgba(249,218,122,0.86)"></div>
<svg class="abs" style="left:42.5px;top:535.3px;width:17.200px;height:17.200px;fill:none;stroke:#5d6d8e;stroke-width:2;stroke-linecap:round;stroke-linejoin:round" viewBox="0 0 24 24"><path d="M11 4.700a.7.700 0 0 0-1.200-.5L6.400 7.600A1.400 1.400 0 0 1 5.400 8H3a1 1 0 0 0-1 1v6a1 1 0 0 0 1 1h2.400a1.400 1.400 0 0 1 1 .4l3.400 3.400a.7.700 0 0 0 1.200-.5z"/><path d="M16 9a5 5 0 0 1 0 6"/><path d="M19.400 18.400a9 9 0 0 0 0-12.700"/></svg>
<div id="snd" class="t" style="left:65.83px;letter-spacing:0.470px;top:533px">Sound-1.Mp3</div>
<div class="abs" id="ph" style="left:239.0px;top:100px;width:4.300px;height:479px;background:#ee4545"></div>
<svg class="abs" style="left:225px;top:90px" width="32" height="30" viewBox="990 1000 32 30"><polygon points="995.7,1008 1016.1,1008 1005.9,1023.5" fill="#ee4545"/></svg>
</div>
<div class="abs" style="left:0;top:1503.600px;width:1310px;height:2.400px;background:#3f4555"></div>
</div>
</body>
</html>
